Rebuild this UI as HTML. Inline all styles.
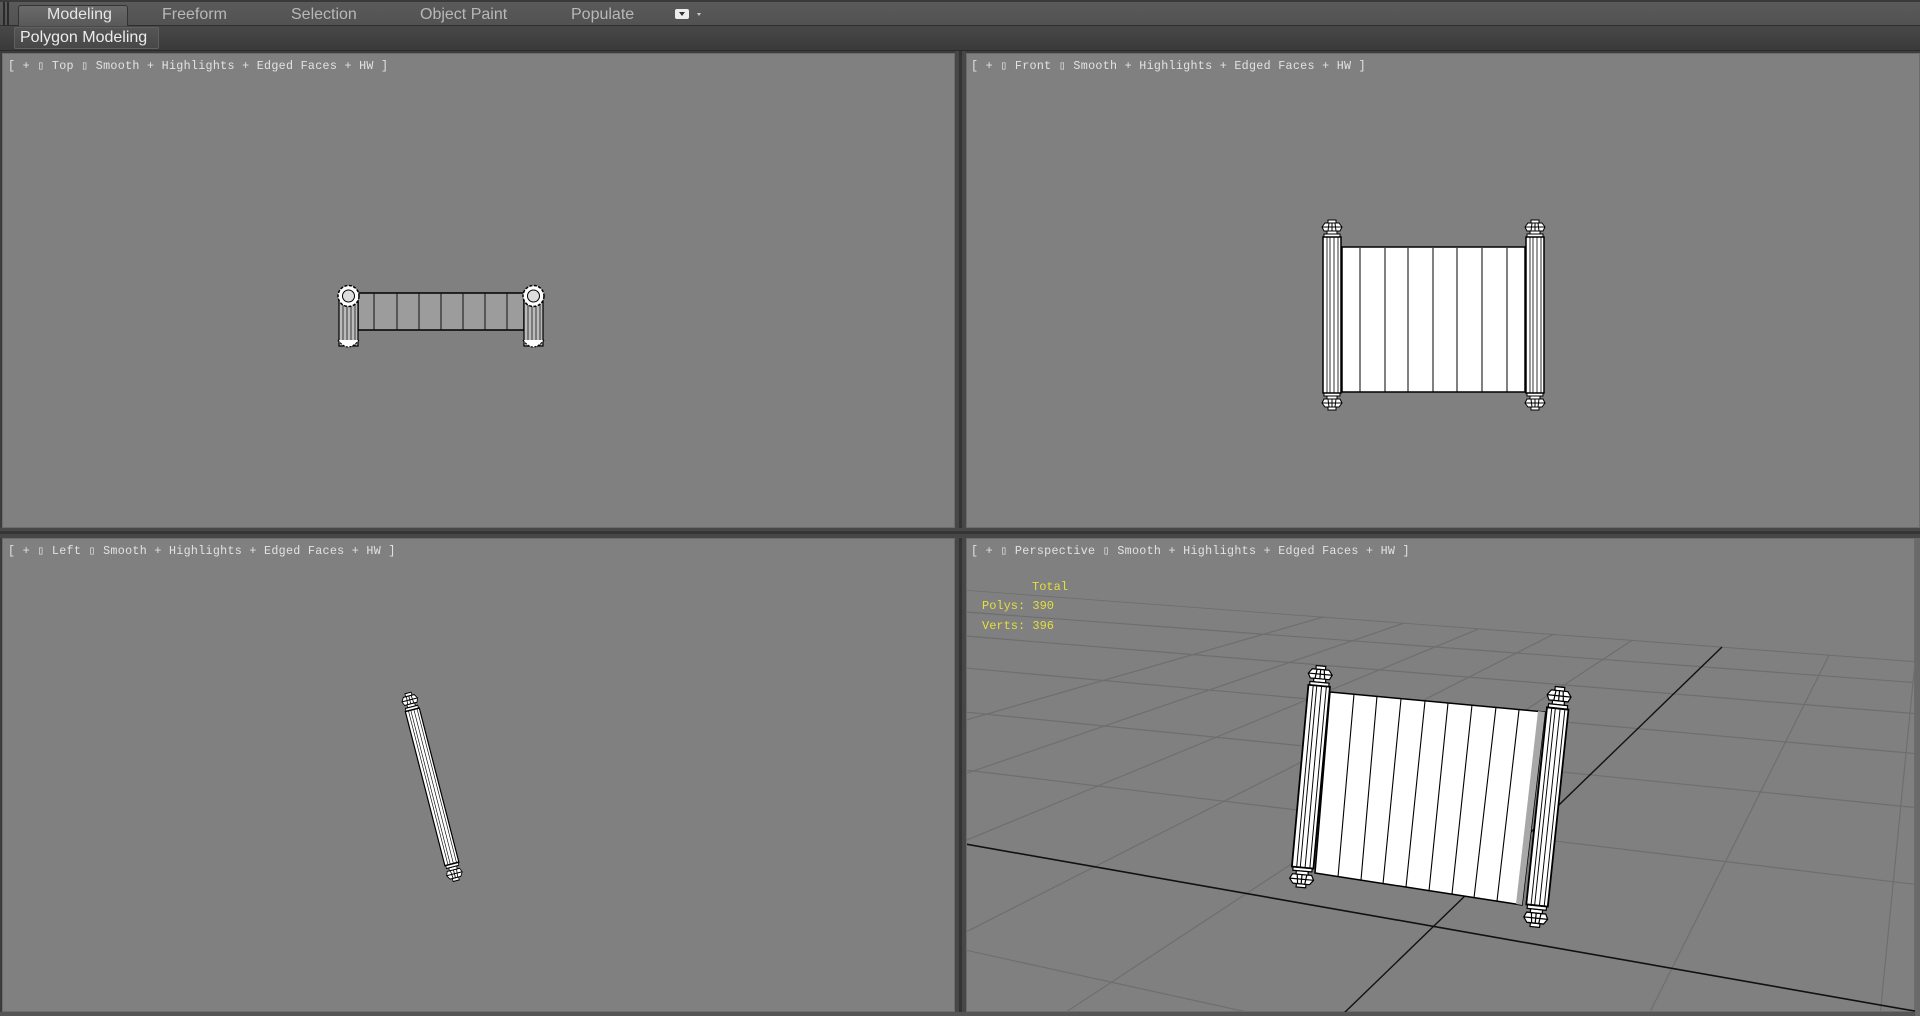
<!DOCTYPE html>
<html><head><meta charset="utf-8"><style>
html,body{margin:0;padding:0;width:1920px;height:1016px;overflow:hidden;}
body{background:#3c3c3c;position:relative;font-family:"Liberation Sans",sans-serif;}
.abs{position:absolute;}
.tabbar{left:0;top:0;width:1920px;height:26px;background:linear-gradient(#5a5a5a,#525252);border-top:2px solid #3a3a3a;box-sizing:border-box;border-bottom:1px solid #2e2e2e;}
.row2{left:0;top:26px;width:1920px;height:25px;background:linear-gradient(#484848,#3a3a3a);border-bottom:1px solid #2a2a2a;box-sizing:border-box;}
.tab{top:5px;font-size:16px;color:#b8b8b8;line-height:20px;}
.vp{background:#808080;position:absolute;overflow:hidden;}
.lbl{position:absolute;font-family:"Liberation Mono","DejaVu Sans Mono",monospace;font-size:11.7px;color:#e2e2e2;white-space:pre;letter-spacing:0.3px;}
.yl{position:absolute;font-family:"Liberation Mono",monospace;font-size:12px;color:#e6de3e;white-space:pre;}
</style></head><body>
<div class="abs tabbar"></div>
<div class="abs" style="left:3px;top:2px;width:2px;height:46px;background:#2a2a2a"></div>
<div class="abs" style="left:7px;top:2px;width:2px;height:46px;background:#2a2a2a"></div>
<div class="abs" style="left:18px;top:5px;width:110px;height:22px;background:linear-gradient(#6a6a6a,#585858);border:1px solid #333;border-bottom:none;border-radius:3px 3px 0 0;box-sizing:border-box"></div>
<div class="abs tab" style="left:47px;color:#e6e6e6">Modeling</div>
<div class="abs tab" style="left:162px">Freeform</div>
<div class="abs tab" style="left:291px">Selection</div>
<div class="abs tab" style="left:420px">Object Paint</div>
<div class="abs tab" style="left:571px">Populate</div>
<div class="abs" style="left:675px;top:9px;width:14px;height:10px;background:#eee;border-radius:2px"></div>
<div class="abs" style="left:679px;top:12px;width:0;height:0;border-left:3px solid transparent;border-right:3px solid transparent;border-top:4px solid #333"></div>
<div class="abs" style="left:697px;top:13px;width:0;height:0;border-left:2.5px solid transparent;border-right:2.5px solid transparent;border-top:3px solid #ccc"></div>
<div class="abs row2"></div>
<div class="abs" style="left:14px;top:27px;width:145px;height:22px;background:linear-gradient(#555,#474747);border:1px solid #606060;box-sizing:border-box;border-radius:2px"></div>
<div class="abs" style="left:20px;top:28px;font-size:16px;color:#ececec;line-height:20px">Polygon Modeling</div>

<div class="vp" style="left:2px;top:53px;width:953px;height:475px;border:1px solid #6c6c6c;box-sizing:border-box"></div>
<div class="vp" style="left:966px;top:53px;width:954px;height:475px;border:1px solid #6c6c6c;box-sizing:border-box"></div>
<div class="vp" style="left:2px;top:538px;width:953px;height:474px;border:1px solid #6c6c6c;box-sizing:border-box"></div>
<div class="vp" style="left:966px;top:538px;width:949px;height:474px;border:1px solid #6c6c6c;box-sizing:border-box"></div>

<svg class="abs" style="left:0;top:0" width="1920" height="1016" viewBox="0 0 1920 1016">
<defs>
<clipPath id="gc"><polygon points="967,590 1915,661 1915,1012 967,1012"/></clipPath>
<clipPath id="vpc"><rect x="967" y="539" width="948" height="473"/></clipPath>
<g id="knob" stroke="#000" stroke-width="1" fill="#fff">
<rect x="-4" y="0" width="8" height="3"/>
<polygon points="-7,3 7,3 10,7 8,11 -8,11 -10,7"/>
<line x1="-10" y1="7" x2="10" y2="7"/>
<line x1="-3" y1="3" x2="-4" y2="11"/><line x1="3" y1="3" x2="4" y2="11"/><line x1="0" y1="3" x2="0" y2="11"/>
<rect x="-5" y="11" width="10" height="3"/>
<rect x="-8" y="14" width="16" height="3"/>
</g>
<g id="roller">
<use href="#knob"/>
<g transform="translate(0,190) scale(1,-1)"><use href="#knob"/></g>
<rect x="-9" y="17" width="18" height="156" fill="#fff" stroke="#000" stroke-width="1.5"/>
<g stroke="#000" stroke-width="0.8"><line x1="-5" y1="17" x2="-5" y2="173"/><line x1="-2" y1="17" x2="-2" y2="173"/><line x1="2" y1="17" x2="2" y2="173"/><line x1="6" y1="17" x2="6" y2="173"/></g>
</g>
</defs>
<rect x="955" y="51" width="11" height="965" fill="#474747"/>
<rect x="959" y="51" width="3" height="965" fill="#333"/>
<rect x="0" y="528" width="1920" height="10" fill="#474747"/>
<rect x="0" y="531" width="1920" height="3" fill="#353535"/>
<rect x="0" y="1012" width="1920" height="4" fill="#555"/>
<rect x="1915" y="538" width="5" height="478" fill="#6a6a6a"/>

<rect x="358" y="293" width="166" height="37" fill="#9c9c9c" stroke="#000" stroke-width="1.5"/>
<g stroke="#111" stroke-width="1"><line x1="374" y1="293" x2="374" y2="330"/><line x1="397" y1="293" x2="397" y2="330"/><line x1="419" y1="293" x2="419" y2="330"/><line x1="441" y1="293" x2="441" y2="330"/><line x1="463" y1="293" x2="463" y2="330"/><line x1="485" y1="293" x2="485" y2="330"/><line x1="507" y1="293" x2="507" y2="330"/></g>
<g id="tr">
<rect x="339" y="296" width="19" height="50" fill="#bbb" stroke="#000" stroke-width="1.2"/>
<g stroke="#000" stroke-width="0.7"><line x1="343" y1="296" x2="343" y2="346"/><line x1="347" y1="296" x2="347" y2="346"/><line x1="351" y1="296" x2="351" y2="346"/><line x1="355" y1="296" x2="355" y2="346"/></g>
<path d="M338,340 Q348,354 359,340" fill="#fff" stroke="#000" stroke-width="1.2" stroke-dasharray="2,1.5"/>
<circle cx="348.5" cy="296" r="10.5" fill="#fff" stroke="#000" stroke-width="1.5" stroke-dasharray="3,1.5"/>
<circle cx="348.5" cy="296" r="6" fill="#ddd" stroke="#000" stroke-width="1"/>
</g>
<g transform="translate(185,0)"><use href="#tr"/></g>

<polygon points="1342,247 1525,247 1525,392 1342,392" fill="#fff" stroke="#000" stroke-width="1.5"/>
<g stroke="#000" stroke-width="1"><line x1="1360" y1="248" x2="1360" y2="392"/><line x1="1385" y1="248" x2="1385" y2="392"/><line x1="1408" y1="248" x2="1408" y2="392"/><line x1="1433" y1="248" x2="1433" y2="392"/><line x1="1457" y1="248" x2="1457" y2="392"/><line x1="1482" y1="248" x2="1482" y2="392"/><line x1="1507" y1="248" x2="1507" y2="392"/></g>
<g transform="translate(1332,220)"><use href="#roller"/></g>
<g transform="translate(1535,220)"><use href="#roller"/></g>

<g transform="translate(408,693) rotate(-14.4) scale(0.8,1.02)"><use href="#roller"/></g>

<g clip-path="url(#vpc)">
<g clip-path="url(#gc)" stroke="#6e6e6e" stroke-width="1.2">
<line x1="965" y1="590" x2="1920" y2="662"/>
<line x1="965" y1="612" x2="1920" y2="683"/>
<line x1="965" y1="636" x2="1920" y2="714"/>
<line x1="965" y1="668" x2="1920" y2="754"/>
<line x1="965" y1="712" x2="1920" y2="808"/>
<line x1="965" y1="770" x2="1920" y2="885"/>
<line x1="965" y1="950" x2="1920" y2="1160"/>
<line x1="1648" y1="1016" x2="1937" y2="440"/>
<line x1="1060" y1="1016" x2="1937" y2="440"/>
<line x1="800" y1="1016" x2="1937" y2="440"/>
<line x1="540" y1="1016" x2="1937" y2="440"/>
<line x1="260" y1="1016" x2="1937" y2="440"/>
<line x1="-60" y1="1016" x2="1937" y2="440"/>
<line x1="1880" y1="1016" x2="1937" y2="440"/>
</g>
<line x1="965" y1="844" x2="1920" y2="1012" stroke="#111" stroke-width="1.6"/>
<line x1="1341" y1="1016" x2="1722" y2="647" stroke="#111" stroke-width="1.4"/>
</g>
<polygon points="1330,692 1545,712 1522,905 1315,873" fill="#fff" stroke="#000" stroke-width="1.5"/>
<polygon points="1538,711 1545,712 1522,905 1516,904" fill="#a8a8a8"/>
<g stroke="#000" stroke-width="1.1">
<line x1="1354" y1="694" x2="1338" y2="877"/><line x1="1377" y1="696" x2="1361" y2="880"/><line x1="1401" y1="699" x2="1383" y2="884"/><line x1="1425" y1="701" x2="1406" y2="887"/><line x1="1448" y1="703" x2="1429" y2="891"/><line x1="1472" y1="705" x2="1452" y2="894"/><line x1="1496" y1="707" x2="1474" y2="898"/><line x1="1519" y1="710" x2="1497" y2="901"/>
</g>
<g transform="translate(1321,666) rotate(5.2) scale(1.2,1.17)"><use href="#roller"/></g>
<g transform="translate(1560,687) rotate(6) scale(1.2,1.27)"><use href="#roller"/></g>
</svg>

<div class="lbl" style="left:8px;top:58px">[ + ▯ Top ▯ Smooth + Highlights + Edged Faces + HW ]</div>
<div class="lbl" style="left:971px;top:58px">[ + ▯ Front ▯ Smooth + Highlights + Edged Faces + HW ]</div>
<div class="lbl" style="left:8px;top:543px">[ + ▯ Left ▯ Smooth + Highlights + Edged Faces + HW ]</div>
<div class="lbl" style="left:971px;top:543px">[ + ▯ Perspective ▯ Smooth + Highlights + Edged Faces + HW ]</div>
<div class="yl" style="left:1032px;top:580px">Total</div>
<div class="yl" style="left:982px;top:599px">Polys: 390</div>
<div class="yl" style="left:982px;top:619px">Verts: 396</div>
</body></html>
